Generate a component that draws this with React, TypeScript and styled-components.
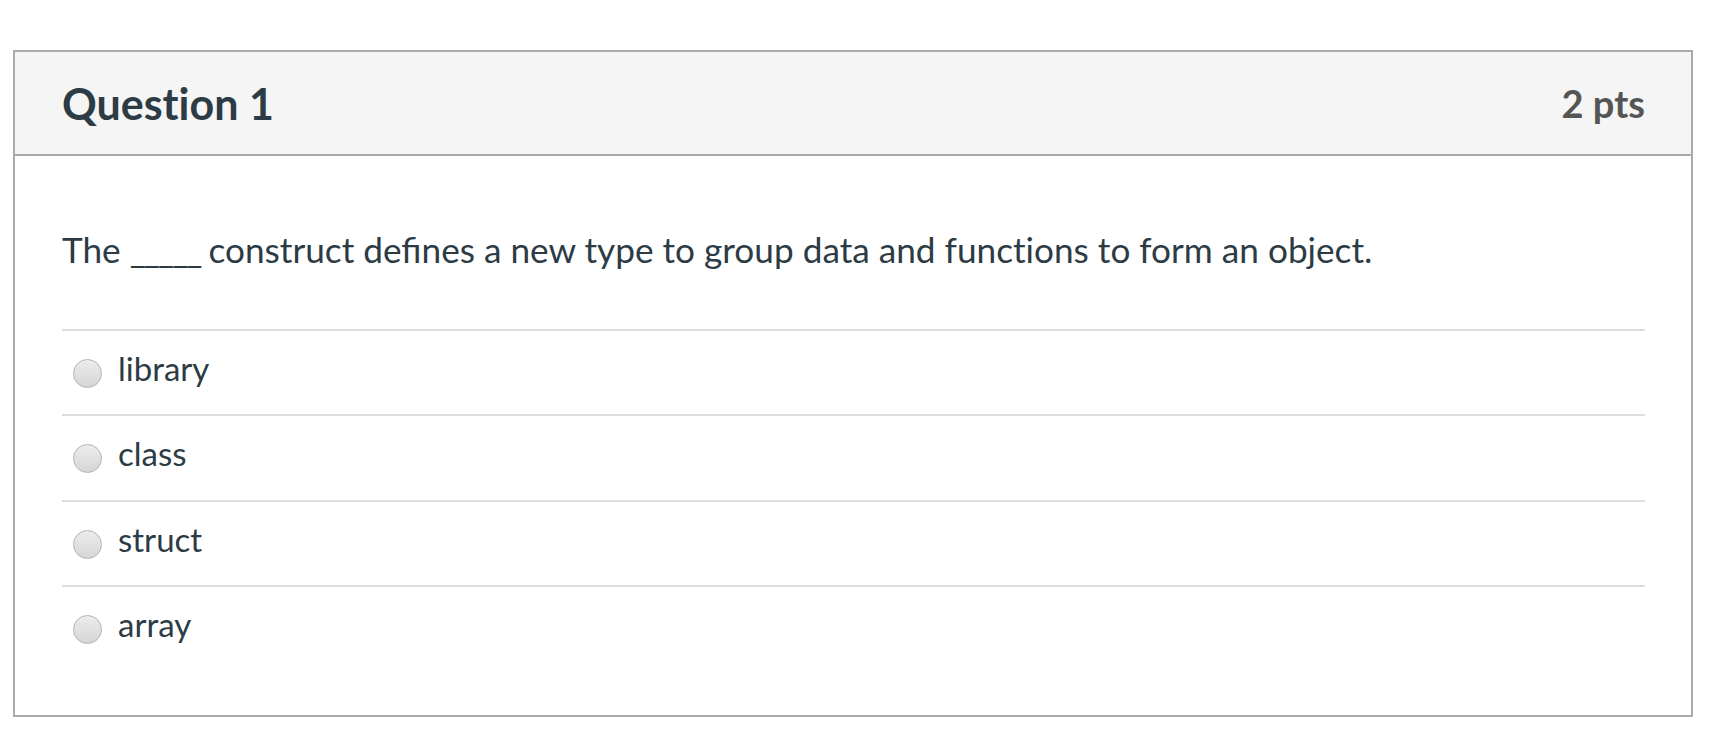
import React from "react";
import styled, { createGlobalStyle } from "styled-components";

const Global = createGlobalStyle`
  html, body { margin: 0; padding: 0; background: #fff; }
  body { font-family: Lato, "Open Sans", sans-serif; color: #2d3b45; }
`;

const Page = styled.div`
  padding: 50px 32px 0 13px;
`;

const Card = styled.section`
  border: 2px solid #aaaaaa;
  background: #fff;
`;

const Header = styled.header`
  display: flex;
  align-items: center;
  justify-content: space-between;
  box-sizing: border-box;
  height: 104px;
  padding: 0 46px 0 47px;
  background: #f5f5f5;
  border-bottom: 2px solid #aaaaaa;
`;

const Title = styled.h2`
  margin: 0;
  font-family: Lato, sans-serif;
  font-weight: 700;
  font-size: 43px;
  color: #2d3b45;
  line-height: 1;
  font-variant-ligatures: none;
`;

const Points = styled.div`
  font-family: Lato, sans-serif;
  font-weight: 700;
  font-size: 38px;
  color: #555555;
  line-height: 1;
`;

const Body = styled.div`
  padding: 65px 46px 45px 47px;
`;

const Prompt = styled.p`
  margin: 0 0 52px;
  font-size: 35.2px;
  line-height: 56px;
  color: #2d3b45;
  font-variant-ligatures: none;
`;

const Lig = styled.span`
  font-variant-ligatures: common-ligatures;
`;

const Blank = styled.span`
  letter-spacing: -2px;
  margin-right: -1px;
`;

const Answers = styled.ul`
  list-style: none;
  margin: 0;
  padding: 0;
`;

const Answer = styled.li`
  display: flex;
  align-items: center;
  gap: 16px;
  height: 85.3px;
  box-sizing: border-box;
  padding-left: 11px;
  border-top: 2px solid #dddddd;
`;

const Radio = styled.span`
  flex: none;
  width: 29px;
  height: 29px;
  border-radius: 50%;
  box-sizing: border-box;
  border: 1.5px solid #b4b4b4;
  background: linear-gradient(#ececec, #d6d6d6);
  margin-top: 2px;
`;

const Label = styled.span`
  font-size: 33px;
  color: #2d3b45;
  line-height: 1;
  margin-top: -8px;
  font-variant-ligatures: none;
`;

const options = ["library", "class", "struct", "array"];

export default function App() {
  return (
    <>
      <Global />
      <Page>
        <Card>
          <Header>
            <Title>Question 1</Title>
            <Points>2 pts</Points>
          </Header>
          <Body>
            <Prompt>
              The <Blank>_____</Blank> construct <Lig>defines</Lig> a new type to group data and functions to form an object.
            </Prompt>
            <Answers>
              {options.map((o) => (
                <Answer key={o}>
                  <Radio />
                  <Label>{o}</Label>
                </Answer>
              ))}
            </Answers>
          </Body>
        </Card>
      </Page>
    </>
  );
}
